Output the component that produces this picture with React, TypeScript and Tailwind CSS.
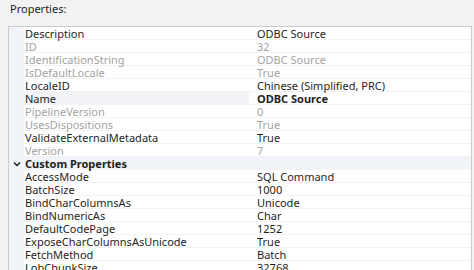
import React from 'react';

type Row = {
  name: string;
  value: string;
  muted?: boolean;
  bold?: boolean;
  selected?: boolean;
};

const general: Row[] = [
  { name: 'Description', value: 'ODBC Source' },
  { name: 'ID', value: '32', muted: true },
  { name: 'IdentificationString', value: 'ODBC Source', muted: true },
  { name: 'IsDefaultLocale', value: 'True', muted: true },
  { name: 'LocaleID', value: 'Chinese (Simplified, PRC)' },
  { name: 'Name', value: 'ODBC Source', bold: true, selected: true },
  { name: 'PipelineVersion', value: '0', muted: true },
  { name: 'UsesDispositions', value: 'True', muted: true },
  { name: 'ValidateExternalMetadata', value: 'True' },
  { name: 'Version', value: '7', muted: true },
];

const custom: Row[] = [
  { name: 'AccessMode', value: 'SQL Command' },
  { name: 'BatchSize', value: '1000' },
  { name: 'BindCharColumnsAs', value: 'Unicode' },
  { name: 'BindNumericAs', value: 'Char' },
  { name: 'DefaultCodePage', value: '1252' },
  { name: 'ExposeCharColumnsAsUnicode', value: 'True' },
  { name: 'FetchMethod', value: 'Batch' },
  { name: 'LobChunkSize', value: '32768' },
];

const PropRow = ({ row }: { row: Row }) => {
  const color = row.muted ? 'text-[#a3a3a3]' : 'text-[#1e1e1e]';
  return (
    <div className="flex h-[13px] items-center">
      <div className="w-[15px] h-full bg-[#f0f3f7] shrink-0" />
      <div
        className={`w-[225px] h-full flex items-center pl-[1px] border-b border-[#f3f3f3] ${color} ${
          row.selected ? 'bg-[#f1f3f7]' : ''
        }`}
      >
        {row.name}
      </div>
      <div
        className={`flex-1 h-full flex items-center pl-[8px] border-b border-[#f3f3f3] ${color} ${
          row.bold ? 'font-bold' : ''
        }`}
      >
        {row.value}
      </div>
    </div>
  );
};

export default function App() {
  return (
    <div
      className="w-[474px] h-[270px] overflow-hidden bg-[#f2f2f2] text-[11px] leading-[13px]"
      style={{ fontFamily: '"Noto Sans", "Open Sans", sans-serif' }}
    >
      <div className="h-[26px] pl-[10px] pt-[2px] text-[#1e1e1e]">Properties:</div>
      <div className="ml-[8px] mr-[2px] border-t border-l border-r border-[#cccccc] bg-white">
        {general.map((r) => (
          <PropRow key={r.name} row={r} />
        ))}
        <div className="flex h-[13px] items-center bg-[#f0f3f7]">
          <div className="w-[15px] h-full flex items-center justify-center shrink-0">
            <svg width="8" height="6" viewBox="0 0 8 6">
              <path d="M1 1.5 L4 4.5 L7 1.5" fill="none" stroke="#1e1e1e" strokeWidth="1.4" />
            </svg>
          </div>
          <div className="flex-1 pl-[1px] font-bold text-[#1e1e1e]">Custom Properties</div>
        </div>
        {custom.map((r) => (
          <PropRow key={r.name} row={r} />
        ))}
      </div>
    </div>
  );
}
